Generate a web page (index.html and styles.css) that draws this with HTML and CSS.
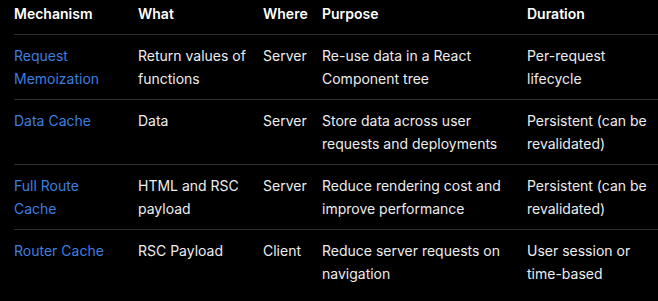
FILE: index.html
```html
<!DOCTYPE html>
<html lang="en">
<head>
    <meta charset="UTF-8">
    <meta name="viewport" content="width=device-width, initial-scale=1.0">
    <title>Caching Overview</title>
    <link rel="stylesheet" href="styles.css">
</head>
<body>
    <table class="cache-table">
        <colgroup>
            <col class="col-mech">
            <col class="col-what">
            <col class="col-where">
            <col class="col-purpose">
            <col>
        </colgroup>
        <thead>
            <tr>
                <th>Mechanism</th>
                <th>What</th>
                <th>Where</th>
                <th>Purpose</th>
                <th>Duration</th>
            </tr>
        </thead>
        <tbody>
            <tr>
                <td><a href="#request-memoization">Request Memoization</a></td>
                <td>Return values of functions</td>
                <td>Server</td>
                <td>Re-use data in a React Component tree</td>
                <td>Per-request lifecycle</td>
            </tr>
            <tr>
                <td><a href="#data-cache">Data Cache</a></td>
                <td>Data</td>
                <td>Server</td>
                <td>Store data across user requests and deployments</td>
                <td>Persistent (can be revalidated)</td>
            </tr>
            <tr>
                <td><a href="#full-route-cache">Full Route Cache</a></td>
                <td>HTML and RSC payload</td>
                <td>Server</td>
                <td>Reduce rendering cost and improve performance</td>
                <td>Persistent (can be revalidated)</td>
            </tr>
            <tr>
                <td><a href="#router-cache">Router Cache</a></td>
                <td>RSC Payload</td>
                <td>Client</td>
                <td>Reduce server requests on navigation</td>
                <td>User session or time-based</td>
            </tr>
        </tbody>
    </table>
</body>
</html>
```

FILE: styles.css
```css
html, body {
    background: #000;
}
body {
    margin: 0;
    padding: 0 0 0 14px;
    font-family: Inter, "Noto Sans", sans-serif;
    font-size: 14px;
    line-height: 23px;
    color: #ededed;
}
.cache-table {
    width: 644px;
    border-collapse: collapse;
    table-layout: fixed;
}
.col-mech { width: 124px; }
.col-what { width: 125px; }
.col-where { width: 59px; }
.col-purpose { width: 205px; }
th, td {
    text-align: left;
    vertical-align: top;
    padding: 0 14px 0 0;
}
th:last-child, td:last-child {
    padding-right: 0;
}
th {
    font-weight: 600;
    color: #fff;
    padding-top: 2px;
    padding-bottom: 9px;
    border-bottom: 1px solid #2e2e2e;
}
td {
    padding-top: 9px;
    padding-bottom: 9px;
}
tbody tr + tr td {
    border-top: 1px solid #2e2e2e;
}
a {
    color: #3b7fe0;
    text-decoration: none;
}
```
